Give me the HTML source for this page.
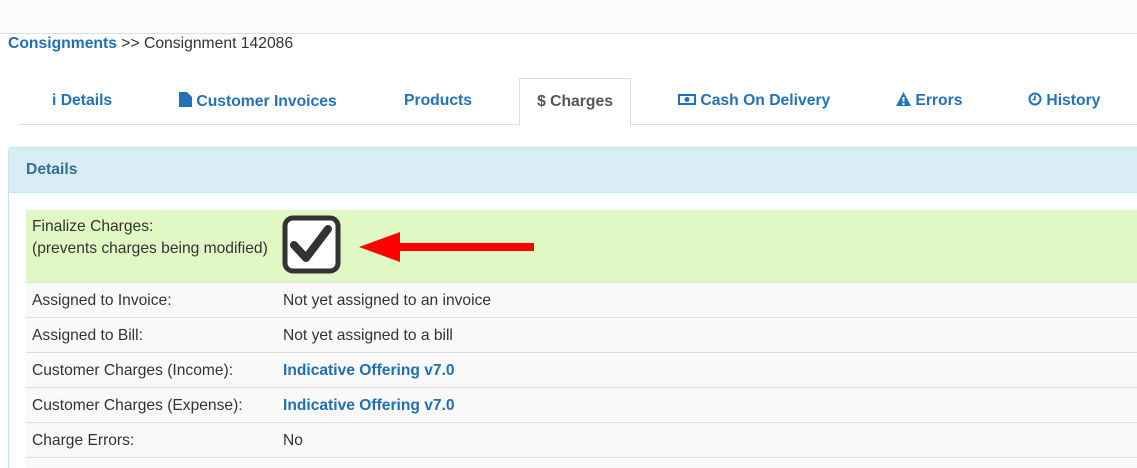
<!DOCTYPE html>
<html><head><style>
html,body{margin:0;width:1137px;height:468px;overflow:hidden}
body{background:#fff;font-family:"Liberation Sans",sans-serif;font-size:15.6px;color:#333;position:relative}
.top{position:absolute;left:0;top:0;width:1137px;height:33px;background:#fbfbfb;border-bottom:1px solid #ddd}
.bc{position:absolute;left:8px;top:35px;font-size:15.7px}
.bc b{color:#1f6fb5}
.tabs{position:absolute;left:20px;top:124px;width:1117px;border-top:1px solid #ddd}
.tab{position:absolute;top:92px;font-weight:bold;color:#2372b9;font-size:15.7px}
.act{position:absolute;left:519px;top:78px;width:110px;height:47px;border:1px solid #ddd;border-bottom:none;background:#fff;color:#555;font-weight:bold;font-size:15.7px;text-align:center;line-height:45px}
.panel{position:absolute;left:8px;top:147px;width:1140px;height:330px;border:1px solid #bce8f1;border-radius:3px;box-sizing:border-box}
.ph{height:44px;background:#d9edf7;border-bottom:1px solid #bce8f1;color:#31708f;font-weight:bold;font-size:15.7px;line-height:44px;padding-left:17px}
.row{position:absolute;left:26px;width:1111px;height:34px;border-top:1px solid #ddd;background:#f9f9f9;line-height:36px}
.row span{position:absolute;left:6px}
.row i{position:absolute;left:257px;font-style:normal}
.row a{position:absolute;left:257px;font-weight:bold;color:#1f6fb5}
</style></head><body>
<div class="top"></div>
<div class="bc"><b>Consignments</b> &gt;&gt; Consignment 142086</div>
<div class="tabs"></div>
<div class="tab" style="left:52px">i Details</div>
<div class="tab" style="left:179px"><svg width="13" height="15" style="vertical-align:-1px"><path d="M0 0H8L13 5V15H0Z" fill="#2372b9"/></svg> Customer Invoices</div>
<div class="tab" style="left:404px">Products</div>
<div class="act">$ Charges</div>
<div class="tab" style="left:678px"><svg width="18" height="11" style="vertical-align:0"><rect x="1" y="1" width="16" height="9" fill="none" stroke="#2372b9" stroke-width="2"/><circle cx="9" cy="5.5" r="2.5" fill="#2372b9"/></svg> Cash On Delivery</div>
<div class="tab" style="left:896px"><svg width="15" height="14" style="vertical-align:-1px"><path d="M7.5 0L15 14H0Z" fill="#2372b9"/><rect x="6.5" y="5" width="2" height="5" fill="#fff"/><rect x="6.5" y="11" width="2" height="2" fill="#fff"/></svg> Errors</div>
<div class="tab" style="left:1028px"><svg width="14" height="14" style="vertical-align:-1px"><circle cx="7" cy="7" r="5.5" fill="none" stroke="#2372b9" stroke-width="2"/><path d="M7 3.5V7.5H4.5" fill="none" stroke="#2372b9" stroke-width="1.6"/></svg> History</div>
<div class="panel"><div class="ph">Details</div></div>
<div class="row" style="top:210px;height:72px;background:#dff8c4;border-top:none;line-height:22px"><span style="top:6px">Finalize Charges:<br>(prevents charges being modified)</span>
<svg style="position:absolute;left:256px;top:5px" width="260" height="60"><rect x="3" y="3" width="53" height="53" rx="8" fill="#fff" stroke="#333" stroke-width="5"/><path d="M12 30L24 43L46 14" fill="none" stroke="#333" stroke-width="8" stroke-linecap="round" stroke-linejoin="round"/><path d="M77 32L118 17V28H252V36H118V47Z" fill="#f00"/></svg></div>
<div class="row" style="top:282px"><span>Assigned to Invoice:</span><i>Not yet assigned to an invoice</i></div>
<div class="row" style="top:317px"><span>Assigned to Bill:</span><i>Not yet assigned to a bill</i></div>
<div class="row" style="top:352px"><span>Customer Charges (Income):</span><a>Indicative Offering v7.0</a></div>
<div class="row" style="top:387px"><span>Customer Charges (Expense):</span><a>Indicative Offering v7.0</a></div>
<div class="row" style="top:422px"><span>Charge Errors:</span><i>No</i></div>
<div class="row" style="top:457px;height:10px"></div>
</body></html>
